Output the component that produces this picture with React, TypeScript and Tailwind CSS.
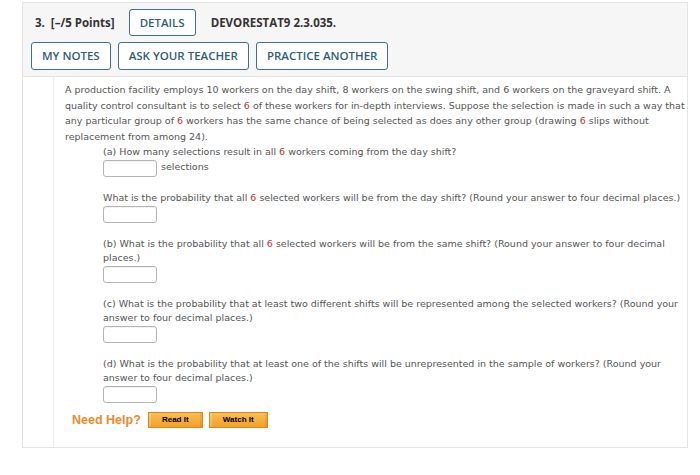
import React from "react";

const verdana = { fontFamily: '"DejaVu Sans", Verdana, sans-serif' };

// Red highlighted number inside question text
function Hl({ children }: { children: React.ReactNode }) {
  return <span className="text-[#c8322a]">{children}</span>;
}

function AnswerBox() {
  return (
    <div className="h-[17px] w-[54px] rounded-[3px] border border-[#b4b4b4] bg-white shadow-[inset_0_1px_1px_rgba(0,0,0,0.06)]" />
  );
}

function OutlineButton({ label, h = "h-[28px]" }: { label: string; h?: string }) {
  return (
    <button className={`${h} rounded-[3px] border-[1.5px] border-[#3f6f89] bg-white px-[10px] text-[11.5px] font-semibold text-[#2f5d77]`}>
      {label}
    </button>
  );
}

function HelpButton({ label, width }: { label: string; width: string }) {
  return (
    <button
      className={`${width} h-[16px] border border-[#d58a1e] bg-gradient-to-b from-[#fbbd55] to-[#f29f28] text-[8px] font-bold leading-none text-black shadow-[inset_2px_0_0_#fff3,inset_-2px_0_0_#0001]`}
      style={{ fontFamily: '"Liberation Sans", Arial, sans-serif' }}
    >
      {label}
    </button>
  );
}

function Question({ lines }: { lines: React.ReactNode }) {
  return (
    <div className="mt-[14px]">
      <p className="whitespace-nowrap leading-[14px]">{lines}</p>
      <div className="mt-px">
        <AnswerBox />
      </div>
    </div>
  );
}

export default function App() {
  return (
    <div className="h-[475px] w-[700px] bg-white pl-[22px] pt-[2px]">
      <div className="w-[666px] border border-[#e4e4e4]">
        {/* header */}
        <div
          className="border-b border-[#e6e6e6] bg-[#f6f6f6] pb-[6px] pl-[8px] pt-[6px]"
          style={{ fontFamily: '"Open Sans", sans-serif' }}
        >
          <div className="flex items-center">
            <span className="ml-[4px] text-[11.5px] font-bold text-[#333]">3.&nbsp; [–/5 Points]</span>
            <span className="ml-[14px] flex">
              <OutlineButton label="DETAILS" h="h-[27px]" />
            </span>
            <span className="ml-[15px] text-[11.5px] font-bold text-[#333]">DEVORESTAT9 2.3.035.</span>
          </div>
          <div className="mt-[6px] flex gap-[7px]">
            <OutlineButton label="MY NOTES" />
            <OutlineButton label="ASK YOUR TEACHER" />
            <OutlineButton label="PRACTICE ANOTHER" />
          </div>
        </div>

        {/* body */}
        <div
          className="ml-[30px] border-l border-[#ececec] pb-[17px] pl-[11px] pr-[8px] pt-[5px] text-[9.5px] text-[#555]"
          style={verdana}
        >
          <p className="whitespace-nowrap leading-[15.5px]">
            A production facility employs 10 workers on the day shift, 8 workers on the swing shift, and 6 workers on the graveyard shift. A
            <br />
            quality control consultant is to select <Hl>6</Hl> of these workers for in-depth interviews. Suppose the selection is made in such a way that
            <br />
            any particular group of <Hl>6</Hl> workers has the same chance of being selected as does any other group (drawing <Hl>6</Hl> slips without
            <br />
            replacement from among 24).
          </p>

          <div className="pl-[38px]">
            <div className="mt-px">
              <p className="whitespace-nowrap leading-[14px]">
                (a) How many selections result in all <Hl>6</Hl> workers coming from the day shift?
              </p>
              <div className="mt-px flex items-start gap-[4px]">
                <AnswerBox />
                <span className="leading-[14px]">selections</span>
              </div>
            </div>

            <Question
              lines={
                <>
                  What is the probability that all <Hl>6</Hl> selected workers will be from the day shift? (Round your answer to four decimal places.)
                </>
              }
            />
            <Question
              lines={
                <>
                  (b) What is the probability that all <Hl>6</Hl> selected workers will be from the same shift? (Round your answer to four decimal
                  <br />
                  places.)
                </>
              }
            />
            <Question
              lines={
                <>
                  (c) What is the probability that at least two different shifts will be represented among the selected workers? (Round your
                  <br />
                  answer to four decimal places.)
                </>
              }
            />
            <Question
              lines={
                <>
                  (d) What is the probability that at least one of the shifts will be unrepresented in the sample of workers? (Round your
                  <br />
                  answer to four decimal places.)
                </>
              }
            />
          </div>

          <div className="mt-[8px] flex items-center gap-[6px] pl-[7px]">
            <span
              className="mr-[1px] text-[12.5px] font-bold text-[#ec8a2c]"
              style={{ fontFamily: '"Liberation Sans", Arial, sans-serif' }}
            >
              Need Help?
            </span>
            <HelpButton label="Read It" width="w-[55px]" />
            <HelpButton label="Watch It" width="w-[59px]" />
          </div>
        </div>
      </div>
    </div>
  );
}
